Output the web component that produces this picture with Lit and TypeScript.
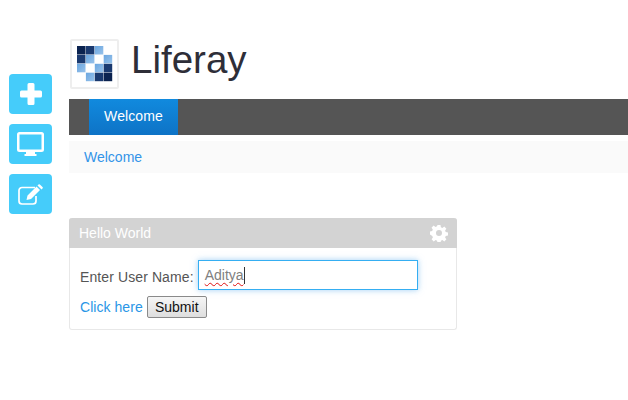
import { LitElement, html, css, svg } from "lit";
import { customElement } from "lit/decorators.js";

const DARK = "#0b2350";
const MID = "#1a3a70";
const cells: [number, number, string][] = [
  [0, 0, DARK], [1, 0, MID], [2, 0, "url(#lt)"],
  [0, 1, MID], [1, 1, "url(#lt)"], [3, 1, "url(#lt)"],
  [0, 2, "url(#lt)"], [2, 2, "url(#lt)"], [3, 2, MID],
  [1, 3, "url(#lt)"], [2, 3, MID], [3, 3, DARK],
];

@customElement("app-root")
export class AppRoot extends LitElement {
  static styles = css`
    :host { display: block; position: relative; width: 628px; height: 400px; overflow: hidden; background: #fff; font-family: "Liberation Sans", Arial, sans-serif; color: #555; font-size: 14px; }
    .dock { position: absolute; left: 9px; top: 74px; display: flex; flex-direction: column; gap: 10px; }
    .dock-btn { width: 43px; height: 40px; border-radius: 4px; background: #45ccfa; display: flex; align-items: center; justify-content: center; }
    .page { padding: 39px 0 0 69px; display: flex; flex-direction: column; }
    .head { display: flex; align-items: center; gap: 12px; height: 50px; margin-left: 1px; }
    .logo { box-sizing: border-box; width: 49px; height: 50px; border: 2px solid #eee; border-radius: 2px; display: flex; align-items: center; justify-content: center; background: #fff; padding-left: 1px; }
    h1 { margin: 0; font-size: 38.5px; font-weight: 400; color: #2e2e38; line-height: 40px; position: relative; top: -4px; }
    nav { margin-top: 10px; height: 36px; background: #555; padding-left: 20px; display: flex; }
    .tab { width: 89px; background: linear-gradient(#118ade, #0e73c6); color: #fff; display: flex; align-items: center; justify-content: center; font-size: 14px; letter-spacing: .1px; padding: 0 0 2px 0; box-sizing: border-box; }
    .crumb { margin-top: 6px; height: 32px; background: #fafafa; padding-left: 15px; display: flex; align-items: center; color: #3394e8; font-size: 14px; }
    .portlet { margin-top: 45px; width: 388px; height: 112px; box-sizing: border-box; border: 1px solid #e8e8e8; border-top: 0; border-radius: 3px; display: flex; flex-direction: column; }
    .p-head { height: 30px; margin: 0 -1px; background: #d3d3d3; border-radius: 3px 3px 0 0; color: #fff; display: flex; align-items: center; justify-content: space-between; padding: 0 9px 0 10px; font-size: 14px; }
    .p-body { padding: 12px 10px 0 10px; display: flex; flex-direction: column; gap: 6px; }
    .row { display: flex; align-items: center; gap: 4px; }
    .label { letter-spacing: .1px; margin-top: 4px; }
    .input { box-sizing: border-box; width: 220px; height: 30px; border: 1px solid #35aef2; box-shadow: 0 0 6px rgba(82, 168, 236, .55); padding: 0 0 0 6px; display: flex; align-items: center; color: #808080; font-size: 14px; background: #fff; }
    .typed { text-decoration: underline wavy #e01010 1px; text-underline-offset: 2px; border-right: 1px solid #333; line-height: 17px; }
    .link { color: #2a96e6; letter-spacing: .05px; }
    button { font: 14px "Liberation Sans", Arial, sans-serif; color: #111; height: 22px; width: 60px; padding: 0; margin: 0; border: 1px solid #8a8a8a; border-radius: 2px; background: linear-gradient(#f6f6f6, #dedede); }
  `;

  render() {
    return html`
      <div class="dock">
        <div class="dock-btn">
          <svg width="22" height="22" viewBox="0 0 22 22"><path fill="#fff" d="M7.500 1.500A1.500 1.500 0 0 1 9 0h4a1.500 1.500 0 0 1 1.500 1.500v6h6A1.500 1.500 0 0 1 22 9v4a1.500 1.500 0 0 1-1.500 1.500h-6v6A1.500 1.500 0 0 1 13 22H9a1.500 1.500 0 0 1-1.500-1.500v-6h-6A1.500 1.500 0 0 1 0 13V9a1.500 1.500 0 0 1 1.500-1.500h6z"/></svg>
        </div>
        <div class="dock-btn">
          <svg width="27" height="24" viewBox="0 0 27 24"><path fill="#fff" fill-rule="evenodd" d="M2.500 0h22A2.500 2.500 0 0 1 27 2.500v15a2.500 2.500 0 0 1-2.500 2.500H18v2h1.500v2h-12v-2H9v-2H2.500A2.500 2.500 0 0 1 0 17.500v-15A2.500 2.500 0 0 1 2.500 0zM2.500 2.500V17.500h22V2.500z"/></svg>
        </div>
        <div class="dock-btn">
          <svg width="26" height="21" viewBox="0 0 26 21"><path fill="none" stroke="#fff" stroke-width="1.700" d="M17 3.500H4A3 3 0 0 0 1 6.500v10.500a3 3 0 0 0 3 3h11a3 3 0 0 0 3-3v-5"/><path fill="#fff" d="M8.500 16l1-4.500 9-9 3.500 3.500-9 9zM19.500 1.500l1-1a1 1 0 0 1 1.400 0l2.600 2.600a1 1 0 0 1 0 1.400l-1 1z"/></svg>
        </div>
      </div>
      <div class="page">
        <div class="head">
          <div class="logo">
            <svg width="36" height="36" viewBox="0 0 36 36">
              <defs><linearGradient id="lt" x1="0" y1="0" x2="1" y2="1"><stop offset="0" stop-color="#6aa6e0"></stop><stop offset="1" stop-color="#98c2ea"></stop></linearGradient></defs>
              ${cells.map(([x, y, c]) => svg`<rect x=${x * 8.900} y=${y * 8.900} width="8.500" height="8.500" fill=${c}></rect>`)}
            </svg>
          </div>
          <h1>Liferay</h1>
        </div>
        <nav><div class="tab">Welcome</div></nav>
        <div class="crumb">Welcome</div>
        <section class="portlet">
          <div class="p-head">
            <span>Hello World</span>
            <svg width="18" height="18" viewBox="0 0 18 18"><path fill="#fff" fill-rule="evenodd" d="M7.500 1h3l.4 2.300 1.500.6 1.900-1.300 2.100 2.100-1.300 1.900.6 1.500 2.300.4v3l-2.300.4-.6 1.500 1.300 1.900-2.100 2.100-1.900-1.300-1.500.6-.4 2.300h-3l-.4-2.300-1.500-.6-1.900 1.300-2.100-2.100 1.300-1.900-.6-1.500L-.1 10.500v-3l2.300-.4.6-1.500-1.300-1.900 2.100-2.100 1.900 1.300 1.500-.6zM9 6a3 3 0 1 0 0 6 3 3 0 0 0 0-6z"/></svg>
          </div>
          <div class="p-body">
            <div class="row">
              <span class="label">Enter User Name:</span>
              <div class="input" role="textbox"><span class="typed">Aditya</span></div>
            </div>
            <div class="row">
              <span class="link">Click here</span>
              <button>Submit</button>
            </div>
          </div>
        </section>
      </div>
    `;
  }
}
